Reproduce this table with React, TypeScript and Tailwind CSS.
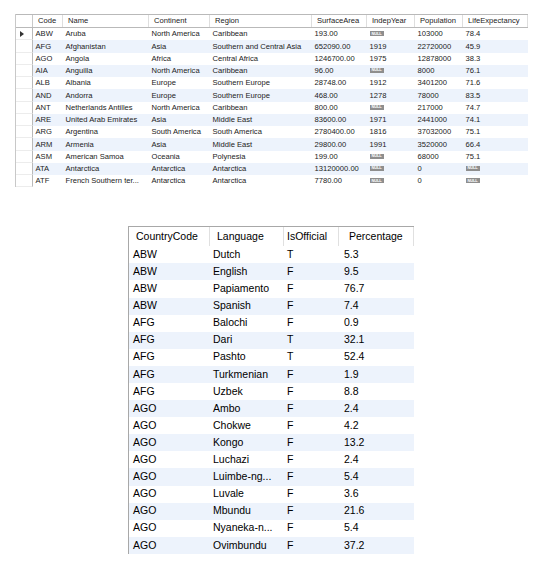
import React from "react";

const topCols = [
  { w: 30, label: "Code" },
  { w: 86, label: "Name" },
  { w: 61, label: "Continent" },
  { w: 102, label: "Region" },
  { w: 55, label: "SurfaceArea" },
  { w: 48, label: "IndepYear" },
  { w: 48, label: "Population" },
  { w: 65, label: "LifeExpectancy" },
];

const N = null;
const topRows: (string | null)[][] = [
  ["ABW", "Aruba", "North America", "Caribbean", "193.00", N, "103000", "78.4"],
  ["AFG", "Afghanistan", "Asia", "Southern and Central Asia", "652090.00", "1919", "22720000", "45.9"],
  ["AGO", "Angola", "Africa", "Central Africa", "1246700.00", "1975", "12878000", "38.3"],
  ["AIA", "Anguilla", "North America", "Caribbean", "96.00", N, "8000", "76.1"],
  ["ALB", "Albania", "Europe", "Southern Europe", "28748.00", "1912", "3401200", "71.6"],
  ["AND", "Andorra", "Europe", "Southern Europe", "468.00", "1278", "78000", "83.5"],
  ["ANT", "Netherlands Antilles", "North America", "Caribbean", "800.00", N, "217000", "74.7"],
  ["ARE", "United Arab Emirates", "Asia", "Middle East", "83600.00", "1971", "2441000", "74.1"],
  ["ARG", "Argentina", "South America", "South America", "2780400.00", "1816", "37032000", "75.1"],
  ["ARM", "Armenia", "Asia", "Middle East", "29800.00", "1991", "3520000", "66.4"],
  ["ASM", "American Samoa", "Oceania", "Polynesia", "199.00", N, "68000", "75.1"],
  ["ATA", "Antarctica", "Antarctica", "Antarctica", "13120000.00", N, "0", N],
  ["ATF", "French Southern ter...", "Antarctica", "Antarctica", "7780.00", N, "0", N],
];

const botCols = [
  { w: 81, label: "CountryCode", hp: "pl-[7px]" },
  { w: 74, label: "Language", hp: "pl-[7px]" },
  { w: 55, label: "IsOfficial", hp: "pl-[3px]" },
  { w: 75, label: "Percentage", hp: "pl-[10px]" },
];

const botRows = [
  ["ABW", "Dutch", "T", "5.3"],
  ["ABW", "English", "F", "9.5"],
  ["ABW", "Papiamento", "F", "76.7"],
  ["ABW", "Spanish", "F", "7.4"],
  ["AFG", "Balochi", "F", "0.9"],
  ["AFG", "Dari", "T", "32.1"],
  ["AFG", "Pashto", "T", "52.4"],
  ["AFG", "Turkmenian", "F", "1.9"],
  ["AFG", "Uzbek", "F", "8.8"],
  ["AGO", "Ambo", "F", "2.4"],
  ["AGO", "Chokwe", "F", "4.2"],
  ["AGO", "Kongo", "F", "13.2"],
  ["AGO", "Luchazi", "F", "2.4"],
  ["AGO", "Luimbe-ng...", "F", "5.4"],
  ["AGO", "Luvale", "F", "3.6"],
  ["AGO", "Mbundu", "F", "21.6"],
  ["AGO", "Nyaneka-n...", "F", "5.4"],
  ["AGO", "Ovimbundu", "F", "37.2"],
];

function NullBadge() {
  return (
    <div className="mt-[3px] w-[14px] h-[5px] bg-[#8e8e8e] flex items-center justify-center">
      <span className="text-[4px] leading-none text-white font-bold tracking-tighter">NULL</span>
    </div>
  );
}

export default function App() {
  return (
    <div
      className="w-[539px] h-[564px] bg-white text-[#1a1a1a] overflow-hidden"
      style={{ fontFamily: '"Liberation Sans", Arial, sans-serif' }}
    >
      {/* top grid */}
      <div className="pt-[14px] pl-[15px]">
        <div className="flex flex-col border-l border-[#c8c8c8] w-[513px]">
          {/* header */}
          <div className="flex h-[14px] border-t border-b border-[#b9b9b9] text-[7.6px] text-[#222]">
            <div className="w-[17px] border-r border-[#c9c9c9]" />
            {topCols.map((c) => (
              <div
                key={c.label}
                style={{ width: c.w }}
                className="pl-[5px] flex items-center border-r border-[#dedede] whitespace-nowrap overflow-hidden"
              >
                {c.label}
              </div>
            ))}
          </div>
          {topRows.map((r, i) => (
            <div key={i} className="flex h-[12.25px] text-[7.6px] text-[#222]">
              <div className="w-[17px] shrink-0 border-r border-[#b9b9b9] border-b border-b-[#ececec] flex items-center pl-[4px]">
                {i === 0 && (
                  <svg width="4" height="6" viewBox="0 0 4 6">
                    <path d="M0 0 L4 3 L0 6 Z" fill="#333" />
                  </svg>
                )}
              </div>
              <div className={`flex flex-1 ${i % 2 === 1 ? "bg-[#edf3fc]" : "bg-white"}`}>
                {r.map((v, j) => (
                  <div
                    key={j}
                    style={{ width: topCols[j].w }}
                    className="shrink-0 pl-[2.5px] flex items-center whitespace-nowrap overflow-hidden"
                  >
                    {v === null ? (
                      <div className="self-start">
                        <NullBadge />
                      </div>
                    ) : (
                      v
                    )}
                  </div>
                ))}
              </div>
            </div>
          ))}
        </div>
      </div>

      {/* bottom grid */}
      <div className="pt-[39px] pl-[128px]">
        <div className="flex flex-col border-l border-[#a8a8a8] w-[286px]">
          <div className="flex h-[20px] border-t border-[#a8a8a8] text-[10.5px] text-black">
            {botCols.map((c) => (
              <div
                key={c.label}
                style={{ width: c.w }}
                className={`${c.hp} shrink-0 flex items-center border-r border-[#e0e0e0] whitespace-nowrap overflow-hidden`}
              >
                {c.label}
              </div>
            ))}
          </div>
          {botRows.map((r, i) => (
            <div
              key={i}
              className={`flex h-[17.1px] text-[10.5px] text-black ${i % 2 === 1 ? "bg-[#edf3fc]" : "bg-white"}`}
            >
              {r.map((v, j) => (
                <div
                  key={j}
                  style={{ width: botCols[j].w }}
                  className={`shrink-0 flex items-center whitespace-nowrap overflow-hidden ${
                    j === 0 ? "pl-[4px]" : j === 1 ? "pl-[3px]" : j === 2 ? "pl-[3px]" : "pl-[5px]"
                  }`}
                >
                  {v}
                </div>
              ))}
            </div>
          ))}
        </div>
      </div>
    </div>
  );
}
